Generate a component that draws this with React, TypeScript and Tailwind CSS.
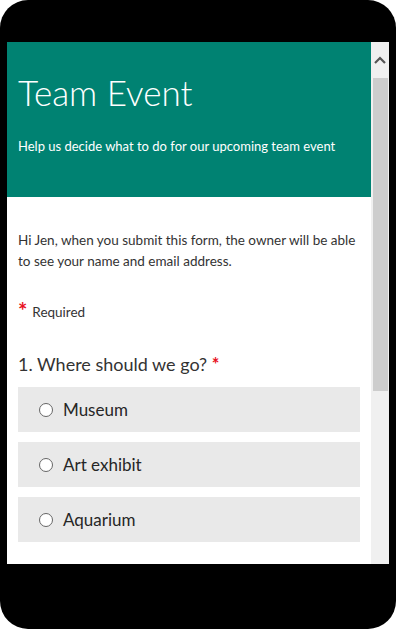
import React from 'react';

const font = { fontFamily: '"Segoe UI", Lato, "Open Sans", sans-serif' };

function Option({ label }: { label: string }) {
  return (
    <div className="h-[45px] bg-[#e9e9e9] flex items-center pl-[21px]">
      <span className="w-[14px] h-[14px] rounded-full border border-[#666] bg-white" />
      <span className="ml-[10px] text-[17px] text-[#262626]">{label}</span>
    </div>
  );
}

export default function App() {
  return (
    <div className="w-[396px] h-[629px] bg-white" style={font}>
      <div className="w-full h-full bg-black rounded-[28px] pt-[42px] px-[7px]">
        <div className="h-[522px] flex bg-white">
          <div className="flex-1 overflow-hidden">
            <div className="h-[155px] bg-[#008272] px-[11px] pt-[28px] text-white">
              <h1 className="text-[35px] font-light leading-[44px]">Team Event</h1>
              <p className="mt-[23px] text-[13px]">Help us decide what to do for our upcoming team event</p>
            </div>
            <div className="px-[11px] pt-[33px]">
              <p className="text-[13.5px] leading-[21px] text-[#333]">
                Hi Jen, when you submit this form, the owner will be able to see your name and email address.
              </p>
              <p className="mt-[30px] text-[13.5px] text-[#333] flex items-start">
                <span className="text-[#e81123] text-[22px] font-bold leading-[18px] mr-[5px]">*</span>
                Required
              </p>
              <p className="mt-[29px] text-[18px] text-[#333]">
                1. Where should we go? <span className="text-[#e81123] font-bold">*</span>
              </p>
              <div className="mt-[9px] flex flex-col gap-[10px]">
                <Option label="Museum" />
                <Option label="Art exhibit" />
                <Option label="Aquarium" />
              </div>
            </div>
          </div>
          <div className="w-[18px] bg-[#f0f0f0] flex flex-col items-center">
            <div className="h-[36px] flex items-center justify-center">
              <svg width="12" height="8" viewBox="0 0 12 8">
                <path d="M1 7 L6 2 L11 7" fill="none" stroke="#555" strokeWidth="2.2" />
              </svg>
            </div>
            <div className="w-[15px] h-[313px] bg-[#cdcdcd]" />
          </div>
        </div>
      </div>
    </div>
  );
}
